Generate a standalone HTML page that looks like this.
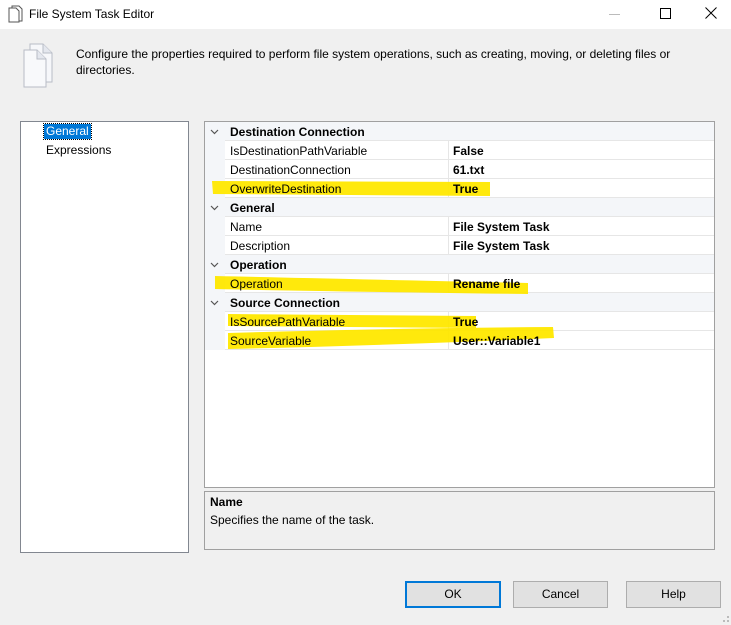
<!DOCTYPE html>
<html><head><meta charset="utf-8"><style>
*{box-sizing:border-box;margin:0;padding:0}
body{width:731px;height:625px;background:#f0f0f0;font-family:"Liberation Sans",sans-serif;font-size:12px;color:#000;position:relative;overflow:hidden}
.abs{position:absolute}
.title{left:0;top:0;width:731px;height:29px;background:#fff}
.row{position:absolute;left:205px;width:509px;height:19px;border-bottom:1px solid #e6e6e6;background:#fff}
.row.cat{background:#f4f6f9;font-weight:bold}
.row span{position:absolute;top:3px;white-space:nowrap}
.row .n{left:25px}
.row .v{left:248px;font-weight:bold}
.row.prop .vline{position:absolute;left:243px;top:0;width:1px;height:19px;background:#e6e6e6}
.btn{position:absolute;top:581px;height:27px;background:#e1e1e1;border:1px solid #adadad;text-align:center;line-height:25px}
</style></head><body>
<div class="abs title"></div>
<svg class="abs" style="left:8px;top:5px" width="16" height="18" viewBox="0 0 16 18"><path d="M4 1h7l3 3v12H4z" fill="#fff" stroke="#555"/><path d="M1 3h7l3 3v11H1z" fill="#fff" stroke="#555"/></svg>
<div class="abs" style="left:29px;top:7px;font-size:12px">File System Task Editor</div>
<div class="abs" style="left:609px;top:14px;width:11px;height:1px;background:#bbb"></div>
<div class="abs" style="left:660px;top:8px;width:11px;height:11px;border:1px solid #000"></div>
<svg class="abs" style="left:705px;top:7px" width="12" height="12"><path d="M0.5 0.5L11.5 11.5M11.5 0.5L0.5 11.5" stroke="#000" stroke-width="1"/></svg>
<svg class="abs" style="left:22px;top:42px" width="36" height="46" viewBox="0 0 36 46"><path d="M8 2h13l9 9v29H8z" fill="#f6f7fa" stroke="#b8bcc6"/><path d="M21 2v9h9" fill="#e4e7ee" stroke="#b8bcc6"/><path d="M2 8h13l9 9v28H2z" fill="#f8f9fb" stroke="#b8bcc6"/><path d="M15 8v9h9" fill="#e4e7ee" stroke="#b8bcc6"/></svg>
<div class="abs" style="left:76px;top:46px;line-height:16px;width:640px">Configure the properties required to perform file system operations, such as creating, moving, or deleting files or directories.</div>
<div class="abs" style="left:20px;top:121px;width:169px;height:432px;background:#fff;border:1px solid #828790"></div>
<div class="abs" style="left:44px;top:124px;background:#0078d7;color:#fff;padding:0 2px;height:15px;line-height:15px;outline:1px dotted #000">General</div>
<div class="abs" style="left:46px;top:143px">Expressions</div>
<div class="abs" style="left:204px;top:121px;width:511px;height:367px;background:#fff;border:1px solid #a0a0a0"></div>
<div class="abs" style="left:205px;top:122px;width:20px;height:228px;background:#f4f6f9"></div>
<div class="row cat" style="top:122px"><span class="n">Destination Connection</span></div>
<div class="row prop" style="top:141px"><span class="n">IsDestinationPathVariable</span><div class="vline"></div><span class="v">False</span></div>
<div class="row prop" style="top:160px"><span class="n">DestinationConnection</span><div class="vline"></div><span class="v">61.txt</span></div>
<div class="row prop" style="top:179px"><span class="n"></span><div class="vline"></div></div>
<div class="row cat" style="top:198px"><span class="n">General</span></div>
<div class="row prop" style="top:217px"><span class="n">Name</span><div class="vline"></div><span class="v">File System Task</span></div>
<div class="row prop" style="top:236px"><span class="n">Description</span><div class="vline"></div><span class="v">File System Task</span></div>
<div class="row cat" style="top:255px"><span class="n">Operation</span></div>
<div class="row prop" style="top:274px"><div class="vline"></div></div>
<div class="row cat" style="top:293px"><span class="n">Source Connection</span></div>
<div class="row prop" style="top:312px"><div class="vline"></div></div>
<div class="row prop" style="top:331px"><div class="vline"></div></div>
<div class="abs" style="left:205px;top:122px;width:20px;height:228px;background:#f4f6f9"></div>
<svg class="abs" style="left:205px;top:122px" width="20" height="228">
<g fill="none" stroke="#555" stroke-width="1.2"><path d="M6 8l3.5 3.5L13 8"/><path d="M6 84l3.5 3.5L13 84"/><path d="M6 141l3.5 3.5L13 141"/><path d="M6 179l3.5 3.5L13 179"/></g></svg>
<svg class="abs" style="left:0;top:0" width="731" height="625">
<g fill="#ffe800" opacity="0.95">
<path d="M212 181 L490 182 L490 196 L213 194 Z"/>
<path d="M215 276 Q300 278 528 283 L528 294 Q300 291 215 289 Z"/>
<path d="M228 314 L476 316 L476 328 L228 326 Z"/>
<path d="M228 333 Q400 328 553 327 L554 338 Q400 345 228 349 Z"/>
</g></svg>
<div class="abs" style="left:230px;top:182px">OverwriteDestination</div>
<div class="abs" style="left:453px;top:182px;font-weight:bold">True</div>
<div class="abs" style="left:230px;top:277px">Operation</div>
<div class="abs" style="left:453px;top:277px;font-weight:bold">Rename file</div>
<div class="abs" style="left:230px;top:315px">IsSourcePathVariable</div>
<div class="abs" style="left:453px;top:315px;font-weight:bold">True</div>
<div class="abs" style="left:230px;top:334px">SourceVariable</div>
<div class="abs" style="left:453px;top:334px;font-weight:bold">User::Variable1</div>
<div class="abs" style="left:204px;top:491px;width:511px;height:59px;border:1px solid #a0a0a0;background:#f0f0f0"></div>
<div class="abs" style="left:210px;top:495px;font-weight:bold">Name</div>
<div class="abs" style="left:210px;top:513px">Specifies the name of the task.</div>
<div class="btn" style="left:405px;width:96px;border:2px solid #0078d7;line-height:23px">OK</div>
<div class="btn" style="left:513px;width:95px">Cancel</div>
<div class="btn" style="left:626px;width:95px">Help</div>
<svg class="abs" style="left:722px;top:615px" width="8" height="8"><g fill="#bbb"><rect x="5" y="1" width="2" height="2"/><rect x="5" y="5" width="2" height="2"/><rect x="1" y="5" width="2" height="2"/></g></svg>
</body></html>
